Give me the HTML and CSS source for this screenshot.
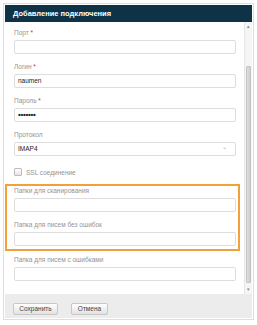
FILE: index.html
```html
<!DOCTYPE html>
<html lang="ru">
<head>
    <meta charset="UTF-8">
    <title>Добавление подключения</title>
    <link rel="stylesheet" href="styles.css">
</head>
<body>
    <div class="dialog">
        <div class="dialog-header">Добавление подключения</div>
        <div class="dialog-body">
            <div class="form">
                <div class="field">
                    <label>Порт <span class="req">*</span></label>
                    <div class="input"></div>
                </div>
                <div class="field">
                    <label>Логин <span class="req">*</span></label>
                    <div class="input">naumen</div>
                </div>
                <div class="field">
                    <label>Пароль <span class="req">*</span></label>
                    <div class="input password">•••••••</div>
                </div>
                <div class="field">
                    <label>Протокол</label>
                    <div class="input select">IMAP4<span class="arrow">⌄</span></div>
                </div>
                <div class="check-row">
                    <span class="checkbox"></span>
                    <span>SSL соединение</span>
                </div>
                <div class="highlight-box">
                    <div class="field">
                        <label>Папки для сканирования</label>
                        <div class="input"></div>
                    </div>
                    <div class="field">
                        <label>Папка для писем без ошибок</label>
                        <div class="input"></div>
                    </div>
                </div>
                <div class="field after-box">
                    <label>Папка для писем с ошибками</label>
                    <div class="input"></div>
                </div>
            </div>
            <div class="scrollbar">
                <div class="sb-arrow">▴</div>
                <div class="sb-thumb"></div>
                <div class="sb-arrow sb-down">▾</div>
            </div>
        </div>
        <div class="dialog-footer">
            <button class="btn btn-save">Сохранить</button>
            <button class="btn btn-cancel">Отмена</button>
        </div>
    </div>
</body>
</html>
```

FILE: styles.css
```css
body {
    margin: 0;
    background-color: #ffffff;
    font-family: "Liberation Sans", Arial, sans-serif;
}
.dialog {
    margin: 3px;
    border: 1px solid #dedede;
    padding: 1px;
}
.dialog-header {
    height: 17px;
    line-height: 17px;
    padding-left: 8px;
    background-color: #0e3347;
    color: #ffffff;
    font-size: 7.5px;
    font-weight: bold;
}
.dialog-body {
    display: flex;
    height: 272px;
}
.form {
    flex: 1;
    padding: 6px 8px 0 9px;
    overflow: hidden;
}
.field {
    margin-bottom: 8px;
}
.field label {
    display: block;
    font-size: 6.5px;
    line-height: 10px;
    color: #949494;
    margin-bottom: 2px;
}
.req {
    color: #cc3333;
}
.input {
    height: 14px;
    box-sizing: border-box;
    border: 1px solid #dddddd;
    border-radius: 2px;
    padding: 0 3px;
    font-size: 6.5px;
    line-height: 12px;
    color: #222222;
    background-color: #ffffff;
}
.password {
    font-size: 8px;
    font-weight: bold;
    letter-spacing: -0.3px;
}
.select {
    display: flex;
    justify-content: space-between;
}
.select .arrow {
    color: #aaaaaa;
    font-size: 6px;
    line-height: 9px;
    margin-right: 5px;
}
.check-row {
    display: flex;
    align-items: center;
    gap: 4px;
    height: 10px;
    padding-top: 3px;
    font-size: 6.5px;
    color: #949494;
}
.checkbox {
    width: 6px;
    height: 6px;
    border: 1px solid #bcbcbc;
    border-radius: 1px;
    background: linear-gradient(#ffffff, #e4e4e4);
}
.highlight-box {
    margin: 7px -4px 0 -9px;
    padding: 0 2px 3px 7px;
    border: 2px solid #f2a13a;
}
.highlight-box .field:last-child {
    margin-bottom: 0;
}
.after-box {
    margin-top: 4px;
}
.scrollbar {
    width: 7px;
    display: flex;
    flex-direction: column;
    background-color: #f5f5f5;
    border-left: 1px solid #e6e6e6;
}
.sb-arrow {
    height: 9px;
    font-size: 5px;
    line-height: 9px;
    text-align: center;
    color: #888888;
}
.sb-thumb {
    margin: 35px 1px 0;
    height: 217px;
    box-sizing: border-box;
    border: 1px solid #c4c4c4;
    border-radius: 1px;
    background: linear-gradient(to right, #dedede, #cfcfcf);
}
.sb-down {
    margin-top: auto;
}
.dialog-footer {
    height: 24px;
    box-sizing: border-box;
    padding: 9px 0 0 8px;
    display: flex;
    align-items: flex-start;
    gap: 13px;
    background-color: #ececec;
}
.btn {
    height: 12px;
    padding: 0;
    border: 1px solid #c8c8c8;
    border-radius: 2px;
    background: linear-gradient(#ffffff, #e2e2e2);
    font-family: "Liberation Sans", Arial, sans-serif;
    font-size: 6.5px;
    color: #444444;
    line-height: 10px;
}
.btn-save {
    width: 45px;
}
.btn-cancel {
    width: 37px;
}
```
